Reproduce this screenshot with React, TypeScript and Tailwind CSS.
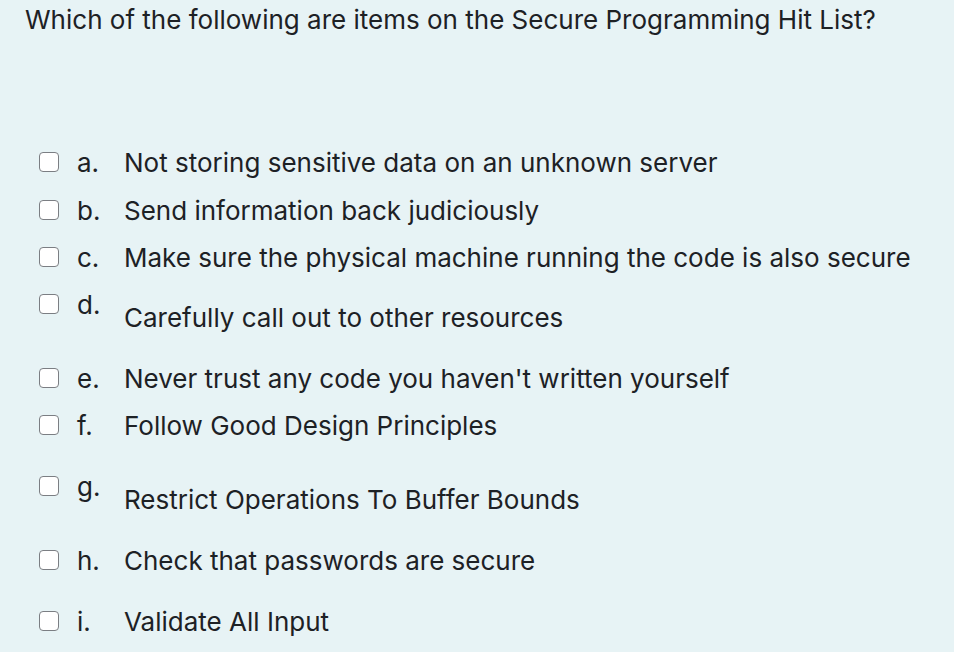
const options = [
  { letter: "a.", text: "Not storing sensitive data on an unknown server", h: "h-[48px]", shift: "pt-0" },
  { letter: "b.", text: "Send information back judiciously", h: "h-[47px]", shift: "pt-0" },
  { letter: "c.", text: "Make sure the physical machine running the code is also secure", h: "h-[47px]", shift: "pt-0" },
  { letter: "d.", text: "Carefully call out to other resources", h: "h-[74px]", shift: "pt-[13px]" },
  { letter: "e.", text: "Never trust any code you haven't written yourself", h: "h-[47px]", shift: "pt-0" },
  { letter: "f.", text: "Follow Good Design Principles", h: "h-[61px]", shift: "pt-0" },
  { letter: "g.", text: "Restrict Operations To Buffer Bounds", h: "h-[74px]", shift: "pt-[13px]" },
  { letter: "h.", text: "Check that passwords are secure", h: "h-[61px]", shift: "pt-0" },
  { letter: "i.", text: "Validate All Input", h: "h-[44px]", shift: "pt-0" },
];

const App = () => {
  return (
    <div className="w-[954px] h-[652px] overflow-hidden bg-[#e7f3f5] text-[#1d2125] font-['Inter','Noto_Sans',sans-serif]">
      {/* question */}
      <h2 className="pl-[25px] pt-[3px] text-[26px] leading-[34px] font-normal">
        Which of the following are items on the Secure Programming Hit List?
      </h2>

      {/* answers */}
      <div className="flex flex-col pl-[39px] pt-[112px]">
        {options.map((o) => (
          <div key={o.letter} className={`flex items-start ${o.h}`}>
            <span className="mt-[3px] w-5 h-5 shrink-0 rounded-[4px] border-[1.5px] border-[#7b7e83] bg-white" />
            <span className="ml-[18px] w-[47px] shrink-0 text-[26px] leading-[28px]">{o.letter}</span>
            <span className={`text-[26px] leading-[28px] ${o.shift}`}>{o.text}</span>
          </div>
        ))}
      </div>
    </div>
  );
};

export default App;
